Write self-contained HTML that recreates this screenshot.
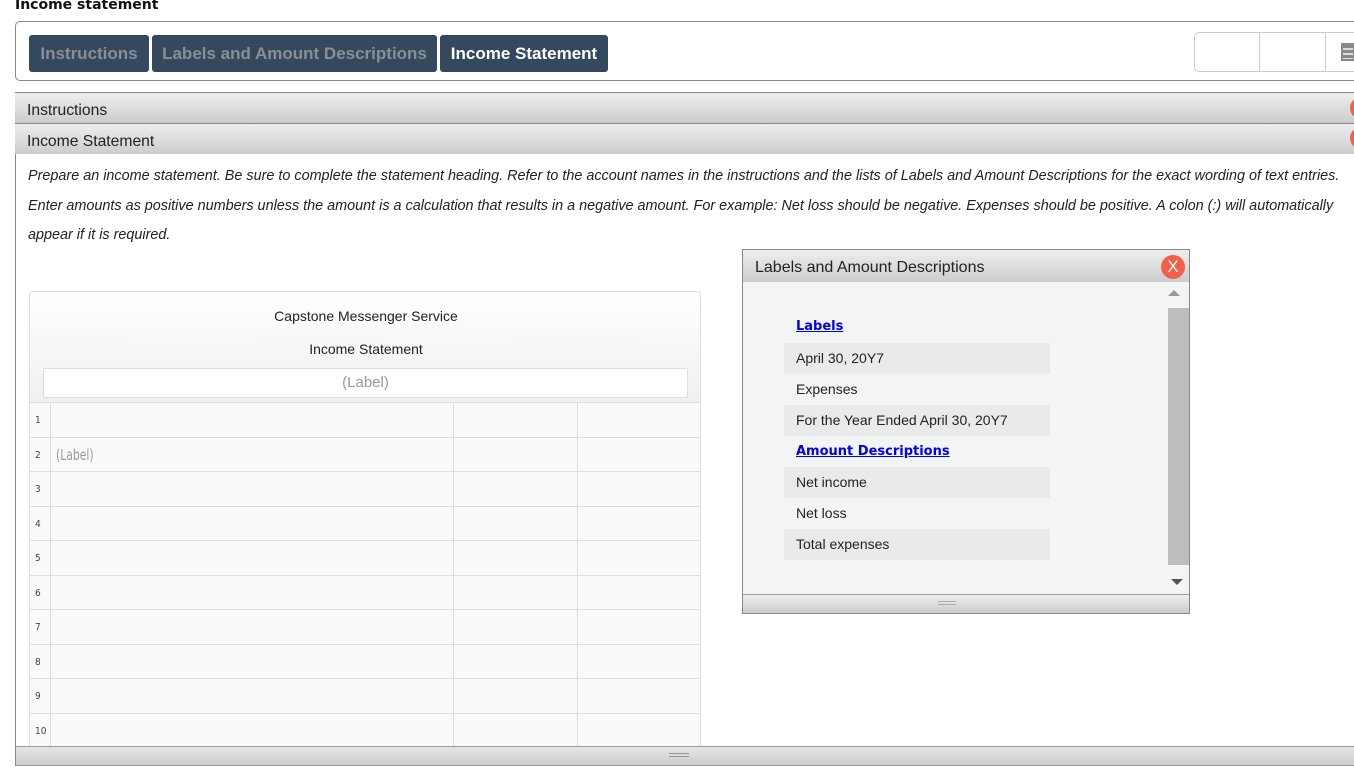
<!DOCTYPE html>
<html><head><meta charset="utf-8"><style>
*{box-sizing:border-box;margin:0;padding:0}
body{width:1354px;height:769px;overflow:hidden;background:#fff;font-family:"Liberation Sans",sans-serif;position:relative;color:#222}
.abs{position:absolute}
.title{left:15px;top:-3px;font-family:"DejaVu Sans",sans-serif;font-weight:bold;font-size:14px;color:#111}
.tabbox{left:15px;top:21px;width:1350px;height:60px;border:1px solid #888;border-radius:5px}
.tab{top:35px;height:37px;background:#34495e;border-radius:3px;color:#8a8f94;font-weight:bold;font-size:17px;line-height:37px;text-align:center}
.bar{left:15px;width:1345px;height:31px;background:linear-gradient(#eee,#ccc);border-top:1px solid #888;font-size:16px;padding-left:12px;line-height:35px;color:#222}
.bar i{font-style:normal;display:inline-block;transform:scaleX(.98);transform-origin:left}
.dot{width:22px;height:22px;border-radius:50%;background:#f0604a;right:-12px}
.inst{left:28px;top:162px;font-style:italic;font-size:14.4px;line-height:29.5px;color:#222;white-space:nowrap}
.tbl{left:29px;top:291px;width:672px;height:460px;border:1px solid #ddd;border-radius:4px;background:#fafafa;overflow:hidden}
.hd{position:absolute;left:0;top:0;width:672px;height:110px;background:linear-gradient(#fff,#f0f0f0)}
.c{position:absolute;width:100%;text-align:center;font-size:14px;color:#222}
.row{position:absolute;left:0;width:672px;height:35px;border-top:1px solid #ddd}
.row span{position:absolute;left:5px;top:12px;font-size:10px;color:#444;font-family:"DejaVu Sans Condensed",sans-serif}
.vl{position:absolute;top:110px;bottom:0;width:1px;background:#ddd}
.dlg{left:742px;top:249px;width:448px;height:365px;border:1px solid #888;background:#f3f4f4}
.item{position:absolute;left:41px;width:266px;height:31px;font-size:14px;line-height:31px;padding-left:12px}
.item.g{background:#eaeaea}
.lnk{position:absolute;left:53px;font-size:13px;font-weight:bold;color:#0000ee;text-decoration:underline;font-family:"DejaVu Sans",sans-serif}
</style></head><body>
<div class="abs title">Income statement</div>
<div class="abs tabbox"></div>
<div class="abs tab" style="left:29px;width:120px">Instructions</div>
<div class="abs tab" style="left:152px;width:285px">Labels and Amount Descriptions</div>
<div class="abs tab" style="left:440px;width:168px;color:#fff">Income Statement</div>
<div class="abs" style="left:1194px;top:32px;width:170px;height:40px;border:1px solid #ccc;border-radius:5px"></div>
<div class="abs" style="left:1259px;top:32px;width:1px;height:40px;background:#ccc"></div>
<div class="abs" style="left:1325px;top:32px;width:1px;height:40px;background:#ccc"></div>
<div class="abs" style="left:1341px;top:43px;width:14px;height:18px;border:2px solid #888;background:repeating-linear-gradient(#888 0 3px,#ddd 3px 5px)"></div>
<div class="abs" style="left:15px;top:92px;width:1px;height:674px;background:#888"></div>
<div class="abs bar" style="top:92px"><i>Instructions</i></div>
<div class="abs dot" style="left:1350px;top:97px"></div>
<div class="abs bar" style="top:123px"><i>Income Statement</i></div>
<div class="abs dot" style="left:1350px;top:127px"></div>
<div class="abs inst">Prepare an income statement. Be sure to complete the statement heading. Refer to the account names in the instructions and the lists of Labels and Amount Descriptions for the exact wording of text entries.<br>Enter amounts as positive numbers unless the amount is a calculation that results in a negative amount. For example: Net loss should be negative. Expenses should be positive. A colon (:) will automatically<br>appear if it is required.</div>
<div class="abs tbl">
<div class="hd">
<div class="c" style="top:16px">Capstone Messenger Service</div>
<div class="c" style="top:49px">Income Statement</div>
<div style="position:absolute;left:13px;top:76px;width:645px;height:30px;background:#fff;border:1px solid #ddd;border-radius:2px;text-align:center;font-size:15px;line-height:28px;color:#999">(Label)</div>
</div>
<div class="row" style="top:110px"><span>1</span></div>
<div class="row" style="top:145px"><span>2</span><b style="position:absolute;left:26px;top:8px;font-weight:normal;font-size:15px;color:#999;font-family:'DejaVu Sans Condensed',sans-serif;transform:scaleX(.8);transform-origin:left">(Label)</b></div>
<div class="row" style="top:179px"><span>3</span></div>
<div class="row" style="top:214px"><span>4</span></div>
<div class="row" style="top:248px"><span>5</span></div>
<div class="row" style="top:283px"><span>6</span></div>
<div class="row" style="top:317px"><span>7</span></div>
<div class="row" style="top:352px"><span>8</span></div>
<div class="row" style="top:386px"><span>9</span></div>
<div class="row" style="top:421px"><span>10</span></div>
<div class="vl" style="left:20px"></div><div class="vl" style="left:423px"></div><div class="vl" style="left:547px"></div>
</div>
<div class="abs" style="left:16px;top:746px;width:1340px;height:20px;background:linear-gradient(#e6e6e6,#ccc);border-top:1px solid #999;border-bottom:1px solid #999"></div>
<div class="abs" style="left:669px;top:753px;width:20px;height:4px;border-top:1px solid #999;border-bottom:1px solid #999"></div>
<div class="abs dlg">
<div style="position:absolute;left:0;top:0;width:446px;height:32px;background:linear-gradient(#eee,#ccc);font-size:16px;line-height:36px;padding-left:12px">Labels and Amount Descriptions</div>
<div style="position:absolute;left:418px;top:5px;width:24px;height:24px;border-radius:50%;background:#f0604a;color:#fff;text-align:center;font-size:17px;line-height:24px">X</div>
<div style="position:absolute;left:425px;top:40px;width:0;height:0;border:6px solid transparent;border-bottom-color:#999;border-top:0"></div>
<div style="position:absolute;left:425px;top:58px;width:21px;height:257px;background:#bdbdbd"></div>
<div style="position:absolute;left:428px;top:329px;border:6px solid transparent;border-top-color:#555;border-bottom:0"></div>
<div class="lnk" style="top:69px">Labels</div>
<div class="item g" style="top:93px">April 30, 20Y7</div>
<div class="item" style="top:124px">Expenses</div>
<div class="item g" style="top:155px">For the Year Ended April 30, 20Y7</div>
<div class="lnk" style="top:194px">Amount Descriptions</div>
<div class="item g" style="top:217px">Net income</div>
<div class="item" style="top:248px">Net loss</div>
<div class="item g" style="top:279px">Total expenses</div>
<div style="position:absolute;left:0;top:344px;width:446px;height:19px;background:linear-gradient(#eee,#ccc);border-top:1px solid #999"></div>
<div style="position:absolute;left:195px;top:351px;width:18px;height:4px;border-top:1px solid #aaa;border-bottom:1px solid #aaa"></div>
</div>
</body></html>
